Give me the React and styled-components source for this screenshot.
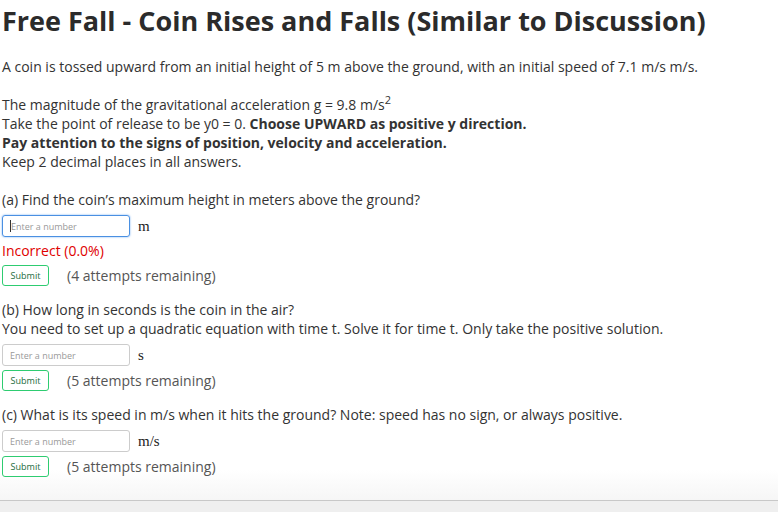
import styled, { createGlobalStyle } from "styled-components";

const Global = createGlobalStyle`
  html, body {
    margin: 0;
    padding: 0;
    background: #ffffff;
  }
  body {
    font-family: "Open Sans", "Liberation Sans", sans-serif;
    color: #333333;
  }
`;

const Page = styled.div`
  width: 778px;
  height: 512px;
  display: flex;
  flex-direction: column;
  overflow: hidden;
`;

const Content = styled.div`
  flex: 1;
  padding: 0 0 0 2px;
  font-size: 14px;
  line-height: 19px;
  background: linear-gradient(to bottom, #ffffff 0, #ffffff 470px, #f6f6f6 500px);
`;

const Title = styled.h1`
  margin: 0;
  padding-top: 3px;
  font-size: 27px;
  line-height: 36px;
  font-weight: 700;
  color: #2b2b2b;
`;

const Para = styled.p`
  margin: ${(p) => p.$top || 0}px 0 0 0;
`;

const Line = styled.div`
  font-weight: ${(p) => (p.$bold ? 700 : 400)};
`;

const Sup = styled.sup`
  font-size: 11px;
  line-height: 0;
`;

const Part = styled.div`
  margin-top: ${(p) => p.$top}px;
`;

const InputRow = styled.div`
  display: flex;
  align-items: center;
  gap: 8px;
  margin-top: 6px;
`;

const NumberInput = styled.div`
  box-sizing: border-box;
  width: 128px;
  height: 22px;
  border: 1px solid ${(p) => (p.$focus ? "#4a90e2" : "#cccccc")};
  border-radius: 3px;
  box-shadow: ${(p) => (p.$focus ? "0 0 2px #6aa8f0" : "none")};
  display: flex;
  align-items: center;
  padding-left: 7px;
  font-size: 9px;
  color: #999999;
`;

const Caret = styled.span`
  display: inline-block;
  width: 1px;
  height: 12px;
  background: #333;
`;

const Unit = styled.span`
  font-family: "Liberation Serif", "DejaVu Serif", serif;
  font-size: 15px;
  color: #222;
`;

const Incorrect = styled.div`
  color: #e00000;
  margin-top: 4px;
`;

const SubmitRow = styled.div`
  display: flex;
  align-items: center;
  gap: 18px;
  margin-top: ${(p) => p.$top}px;
  color: #555555;
`;

const SubmitButton = styled.button`
  box-sizing: border-box;
  width: 47px;
  height: 21px;
  border: 1px solid #2ecc71;
  border-radius: 3px;
  background: #ffffff;
  color: #1a6b3c;
  font-family: "Open Sans", "Liberation Sans", sans-serif;
  font-size: 9px;
  padding: 0;
`;

const Footer = styled.div`
  height: 11px;
  border-top: 1px solid #c8c8c8;
  background: #efefef;
`;

function Question({ label, extra, unit, attempts, focus, incorrect, top }) {
  return (
    <Part $top={top}>
      <Line>{label}</Line>
      {extra && <Line>{extra}</Line>}
      <InputRow>
        <NumberInput $focus={focus}>
          {focus && <Caret />}
          Enter a number
        </NumberInput>
        <Unit>{unit}</Unit>
      </InputRow>
      {incorrect && <Incorrect>{incorrect}</Incorrect>}
      <SubmitRow $top={incorrect ? 5 : 4}>
        <SubmitButton>Submit</SubmitButton>
        <span>({attempts} attempts remaining)</span>
      </SubmitRow>
    </Part>
  );
}

export default function App() {
  return (
    <Page>
      <Global />
      <Content>
        <Title>Free Fall - Coin Rises and Falls (Similar to Discussion)</Title>
        <Para $top={18}>
          A coin is tossed upward from an initial height of 5 m above the ground, with an initial
          speed of 7.1 m/s m/s.
        </Para>
        <Para $top={19}>
          <Line>
            The magnitude of the gravitational acceleration g = 9.8 m/s<Sup>2</Sup>
          </Line>
          <Line>
            Take the point of release to be y0 = 0. <b>Choose UPWARD as positive y direction.</b>
          </Line>
          <Line $bold>Pay attention to the signs of position, velocity and acceleration.</Line>
          <Line>Keep 2 decimal places in all answers.</Line>
        </Para>
        <Question
          top={19}
          label="(a) Find the coin’s maximum height in meters above the ground?"
          unit="m"
          attempts={4}
          focus
          incorrect="Incorrect (0.0%)"
        />
        <Question
          top={14}
          label="(b) How long in seconds is the coin in the air?"
          extra="You need to set up a quadratic equation with time t. Solve it for time t. Only take the positive solution."
          unit="s"
          attempts={5}
        />
        <Question
          top={14}
          label="(c) What is its speed in m/s when it hits the ground? Note: speed has no sign, or always positive."
          unit="m/s"
          attempts={5}
        />
      </Content>
      <Footer />
    </Page>
  );
}
